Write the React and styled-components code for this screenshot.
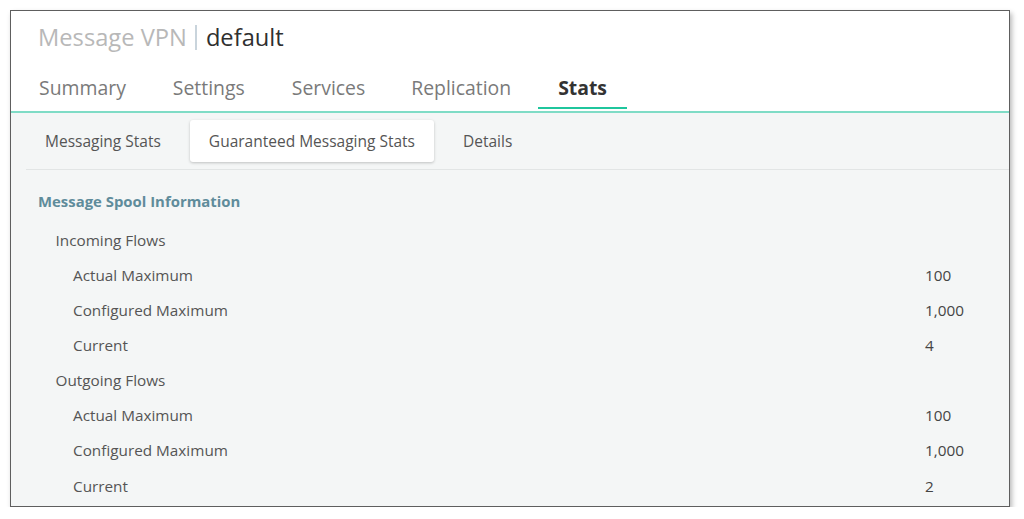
import React from "react";
import styled, { createGlobalStyle } from "styled-components";

const Global = createGlobalStyle`
  html, body { margin: 0; padding: 0; background: #ffffff; }
  body { font-family: "Open Sans", "Noto Sans", sans-serif; }
  * { box-sizing: border-box; }
`;

const Frame = styled.div`
  margin: 10px 0 0 10px;
  width: 1000px;
  height: 497px;
  border: 1px solid #5e5e5e;
  box-shadow: 2px 3px 5px rgba(0, 0, 0, 0.28);
  background: #f4f6f6;
  overflow: hidden;
  display: flex;
  flex-direction: column;
`;

const Header = styled.header`
  background: #ffffff;
  padding: 11px 0 2px 0;
  border-bottom: 2px solid #7fdcc6;
`;

const Title = styled.h1`
  margin: 0 0 14px 27px;
  height: 30px;
  display: flex;
  align-items: center;
  font-size: 23.7px;
  font-weight: 400;
`;

const TitleLabel = styled.span`
  color: #b8b8b8;
`;

const TitleSep = styled.span`
  width: 2px;
  height: 25px;
  background: #c9d4dc;
  margin: 0 9px 0 8px;
`;

const TitleValue = styled.span`
  color: #2f2f2f;
`;

const Tabs = styled.nav`
  display: flex;
  padding-left: 8px;
  height: 43px;
`;

const Tab = styled.div`
  padding: 2px 20px 0;
  margin-right: ${(p) => p.$gap}px;
  display: flex;
  align-items: center;
  font-size: 19.4px;
  color: ${(p) => (p.$active ? "#333333" : "#7a7a7a")};
  font-weight: ${(p) => (p.$active ? 700 : 400)};
  border-bottom: 2px solid ${(p) => (p.$active ? "#1fc69d" : "transparent")};
`;

const SubBar = styled.div`
  display: flex;
  gap: 10px;
  padding: 7px 0;
  margin-left: 15px;
  border-bottom: 1px solid #e2e5e5;
`;

const SubTab = styled.div`
  height: 42px;
  padding: 0 19px;
  display: flex;
  align-items: center;
  font-size: 15.5px;
  color: #555555;
  border-radius: 3px;
  background: ${(p) => (p.$active ? "#ffffff" : "transparent")};
  box-shadow: ${(p) => (p.$active ? "0 1px 3px rgba(0,0,0,0.22)" : "none")};
`;

const Content = styled.section`
  padding: 13px 0 0 27px;
`;

const Heading = styled.h2`
  margin: 0 0 4px 0;
  height: 35px;
  display: flex;
  align-items: center;
  font-size: 14.9px;
  font-weight: 700;
  color: #5f8c9b;
`;

const Row = styled.div`
  display: grid;
  grid-template-columns: 1fr 84px;
  height: 35.15px;
  align-items: center;
  font-size: 15.3px;
  color: #555555;
`;

const Label = styled.span`
  padding-left: ${(p) => p.$level * 17.5}px;
`;

const Value = styled.span`
  color: #444444;
`;

const tabs = [
  { name: "Summary", gap: 7 },
  { name: "Settings", gap: 7 },
  { name: "Services", gap: 6 },
  { name: "Replication", gap: 7 },
  { name: "Stats", gap: 0, active: true },
];

const rows = [
  { label: "Incoming Flows", level: 1 },
  { label: "Actual Maximum", level: 2, value: "100" },
  { label: "Configured Maximum", level: 2, value: "1,000" },
  { label: "Current", level: 2, value: "4" },
  { label: "Outgoing Flows", level: 1 },
  { label: "Actual Maximum", level: 2, value: "100" },
  { label: "Configured Maximum", level: 2, value: "1,000" },
  { label: "Current", level: 2, value: "2" },
];

export default function App() {
  return (
    <>
      <Global />
      <Frame>
        <Header>
          <Title>
            <TitleLabel>Message VPN</TitleLabel>
            <TitleSep />
            <TitleValue>default</TitleValue>
          </Title>
          <Tabs>
            {tabs.map((t) => (
              <Tab key={t.name} $active={t.active} $gap={t.gap}>
                {t.name}
              </Tab>
            ))}
          </Tabs>
        </Header>
        <SubBar>
          <SubTab>Messaging Stats</SubTab>
          <SubTab $active>Guaranteed Messaging Stats</SubTab>
          <SubTab>Details</SubTab>
        </SubBar>
        <Content>
          <Heading>Message Spool Information</Heading>
          {rows.map((r, i) => (
            <Row key={i}>
              <Label $level={r.level}>{r.label}</Label>
              <Value>{r.value || ""}</Value>
            </Row>
          ))}
        </Content>
      </Frame>
    </>
  );
}
